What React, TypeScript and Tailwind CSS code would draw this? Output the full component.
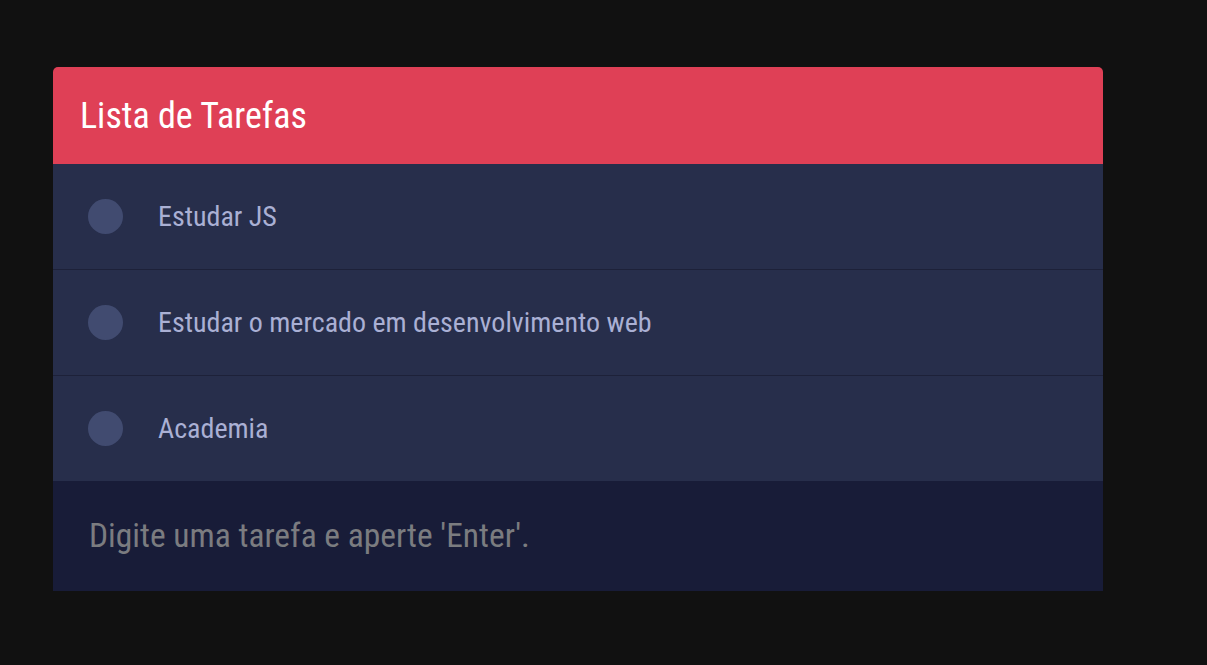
import React, { useState } from "react";

const tasks = ["Estudar JS", "Estudar o mercado em desenvolvimento web", "Academia"];

export default function App() {
  const [items, setItems] = useState(tasks);
  const [value, setValue] = useState("");

  return (
    <div className="min-h-screen bg-[#111111] pt-[67px] pl-[53px] font-['Roboto_Condensed',Roboto,sans-serif] font-stretch-condensed">
      <div className="w-[1050px] overflow-hidden rounded-t-[5px]">
        {/* Header */}
        <div className="flex h-[97px] items-center bg-[#df4056] pl-[27px]">
          <h1 className="text-[36px] leading-none text-white">Lista de Tarefas</h1>
        </div>

        {/* Task list */}
        <ul className="divide-y divide-[#1d2139] bg-[#272e4b]">
          {items.map((task) => (
            <li key={task} className="flex h-[105px] box-content items-center pl-[35px]">
              <span className="h-[35px] w-[35px] rounded-full bg-[#414b70]" />
              <span className="ml-[35px] text-[28px] leading-none text-[#aab0d4]">{task}</span>
            </li>
          ))}
        </ul>

        {/* Input */}
        <div className="flex h-[110px] items-center bg-[#181c38] pl-[36px]">
          <input
            value={value}
            onChange={(e) => setValue(e.target.value)}
            onKeyDown={(e) => {
              if (e.key === "Enter" && value.trim()) {
                setItems([...items, value.trim()]);
                setValue("");
              }
            }}
            placeholder="Digite uma tarefa e aperte 'Enter'."
            className="w-full bg-transparent text-[33.5px] text-[#aab0d4] outline-none placeholder:text-[#7b7c80]"
          />
        </div>
      </div>
    </div>
  );
}
